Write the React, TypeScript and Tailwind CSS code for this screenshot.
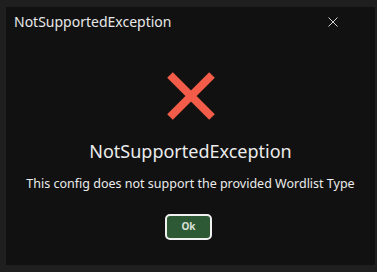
import React from "react";

export default function App() {
  return (
    <div className="w-[377px] h-[272px] bg-[#1f1f1f] pl-[6px] pt-[7px] pr-[2px] pb-[7px]" style={{ fontFamily: '"Noto Sans", "Open Sans", sans-serif' }}>
      <div className="w-[369px] h-[258px] bg-[#111111] flex flex-col">
        <div className="flex items-center justify-between h-[29px] pl-[8px] pr-[37px] pt-[1px]">
          <span className="text-[14px] text-[#e8e8e8] leading-none">NotSupportedException</span>
          <svg width="10" height="10" viewBox="0 0 10 10">
            <path d="M0.5 0.5L9.5 9.5M9.5 0.5L0.5 9.5" stroke="#d0d0d0" strokeWidth="1" />
          </svg>
        </div>
        <div className="flex flex-col items-center">
          <svg width="48" height="48" viewBox="0 0 48 48" className="mt-[36px]">
            <path d="M3 3L45 45M45 3L3 45" stroke="#f25c48" strokeWidth="8" strokeLinecap="butt" />
          </svg>
          <div className="mt-[22px] text-[18px] leading-none text-[#ececec]">NotSupportedException</div>
          <div className="mt-[18px] text-[12.5px] leading-none text-[#ececec]">This config does not support the provided Wordlist Type</div>
          <button className="mt-[23px] mr-[4px] w-[47px] h-[26px] rounded-[5px] border-2 border-[#f0f0f0] bg-[#2d5a35] text-[10px] font-bold text-[#d8e0d8] flex items-center justify-center">Ok</button>
        </div>
      </div>
    </div>
  );
}
